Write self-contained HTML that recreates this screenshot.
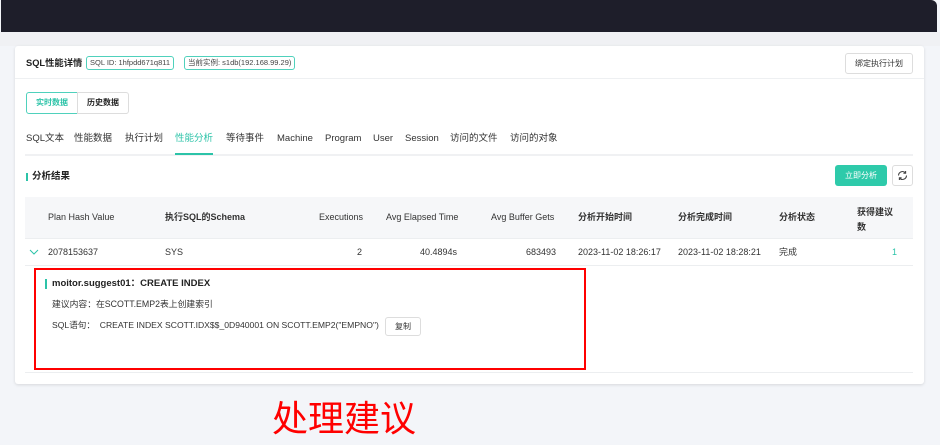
<!DOCTYPE html>
<html><head><meta charset="utf-8"><style>
*{box-sizing:border-box;margin:0;padding:0}
body{width:940px;height:445px;background:#f3f5f9;font-family:"Liberation Sans","Noto Sans CJK SC",sans-serif;color:#333;position:relative;overflow:hidden;font-size:9px;line-height:12px}
.top{position:absolute;left:1px;top:0;width:936px;height:32px;background:#1e1e2a;border-top-right-radius:6px}
.gap{position:absolute;left:0;top:32px;width:940px;height:14px;background:#f0f1f4}
.card{position:absolute;left:15px;top:46px;width:909px;height:338px;background:#fff;border-radius:3px;box-shadow:0 1px 3px rgba(0,0,0,.12)}
.a{position:absolute;white-space:nowrap;line-height:12px}
.t{position:absolute;top:87px;white-space:nowrap;line-height:12px;font-size:9.5px}
.tag{position:absolute;border:1px solid #4fd1bc;border-radius:3px;height:14px;line-height:12px;padding:0 3px;font-size:7.5px;color:#444;white-space:nowrap}
.btn{position:absolute;border:1px solid #ddd;border-radius:3px;background:#fff;text-align:center;font-size:8px;white-space:nowrap}
.th{position:absolute;font-weight:bold;font-size:9px;color:#333;line-height:12px;white-space:nowrap}
</style></head><body>
<div class="top"></div><div class="gap"></div>
<div class="card">
<div class="a" style="left:11px;top:11px;font-size:9.3px;font-weight:bold;color:#222">SQL性能详情</div>
<div class="tag" style="left:71px;top:10px">SQL ID: 1hfpdd671q811</div>
<div class="tag" style="left:169px;top:10px">当前实例: s1db(192.168.99.29)</div>
<div class="btn" style="left:830px;top:7px;width:68px;height:21px;line-height:19px;color:#333">绑定执行计划</div>
<div style="position:absolute;left:0;top:32px;width:909px;height:1px;background:#eef0f2"></div>
<div class="btn" style="left:11px;top:46px;width:52px;height:22px;line-height:20px;border-color:#4fd1bc;color:#2cc3a8;font-weight:bold;border-radius:3px 0 0 3px">实时数据</div>
<div class="btn" style="left:62px;top:46px;width:52px;height:22px;line-height:20px;font-weight:bold;color:#222;border-radius:0 3px 3px 0">历史数据</div>
<div class="t" style="left:11px">SQL文本</div>
<div class="t" style="left:59px">性能数据</div>
<div class="t" style="left:110px">执行计划</div>
<div class="t" style="left:160px;color:#2cc3a8">性能分析</div>
<div class="t" style="left:211px">等待事件</div>
<div class="t" style="left:262px">Machine</div>
<div class="t" style="left:310px">Program</div>
<div class="t" style="left:358px">User</div>
<div class="t" style="left:390px">Session</div>
<div class="t" style="left:435px">访问的文件</div>
<div class="t" style="left:495px">访问的对象</div>
<div style="position:absolute;left:10px;top:108px;width:888px;height:2px;background:#f0f1f3"></div>
<div style="position:absolute;left:160px;top:107px;width:38px;height:2px;background:#2cc3a8"></div>
<div style="position:absolute;left:11px;top:127px;width:2px;height:8px;background:#2cc3a8"></div>
<div class="a" style="left:17px;top:125px;font-size:9.5px;font-weight:bold;color:#222">分析结果</div>
<div class="btn" style="left:820px;top:119px;width:52px;height:21px;line-height:21px;background:#2ecaaa;border:none;color:#fff">立即分析</div>
<div class="btn" style="left:877px;top:119px;width:21px;height:21px">
<svg width="19" height="19" viewBox="0 0 19 19"><path d="M5.5 9.5a4 4 0 0 1 6.8-2.8M13.5 9.5a4 4 0 0 1-6.8 2.8" fill="none" stroke="#444" stroke-width="1.1"/><path d="M12.6 5v2.2h-2.2M6.4 14v-2.2h2.2" fill="none" stroke="#444" stroke-width="1.1"/></svg></div>
<div style="position:absolute;left:10px;top:151px;width:888px;height:42px;background:#f6f7f9;border-bottom:1px solid #eceef0"></div>
<div class="th" style="left:33px;top:165px;font-weight:normal">Plan Hash Value</div>
<div class="th" style="left:150px;top:165px">执行SQL的Schema</div>
<div class="th" style="left:304px;top:165px;font-weight:normal">Executions</div>
<div class="th" style="left:371px;top:165px;font-weight:normal">Avg Elapsed Time</div>
<div class="th" style="left:476px;top:165px;font-weight:normal">Avg Buffer Gets</div>
<div class="th" style="left:563px;top:165px">分析开始时间</div>
<div class="th" style="left:663px;top:165px">分析完成时间</div>
<div class="th" style="left:764px;top:165px">分析状态</div>
<div class="th" style="left:842px;top:159px;line-height:15px">获得建议<br>数</div>
<svg style="position:absolute;left:14px;top:203px" width="10" height="7"><path d="M1 1l4 4 4-4" fill="none" stroke="#2cc3a8" stroke-width="1"/></svg>
<div class="a" style="left:33px;top:200px">2078153637</div>
<div class="a" style="left:150px;top:200px">SYS</div>
<div class="a" style="left:342px;top:200px">2</div>
<div class="a" style="left:405px;top:200px">40.4894s</div>
<div class="a" style="left:511px;top:200px">683493</div>
<div class="a" style="left:563px;top:200px">2023-11-02 18:26:17</div>
<div class="a" style="left:663px;top:200px">2023-11-02 18:28:21</div>
<div class="a" style="left:764px;top:200px">完成</div>
<div class="a" style="left:877px;top:200px;color:#2cc3a8">1</div>
<div style="position:absolute;left:10px;top:219px;width:888px;height:1px;background:#eceef0"></div>
<div style="position:absolute;left:10px;top:326px;width:888px;height:1px;background:#eceef0"></div>
<div style="position:absolute;left:19px;top:222px;width:552px;height:102px;border:2px solid #f00"></div>
<div style="position:absolute;left:30px;top:233px;width:2px;height:10px;background:#2cc3a8"></div>
<div class="a" style="left:37px;top:232px;font-size:9.5px;font-weight:bold;color:#222">moitor.suggest01：CREATE INDEX</div>
<div class="a" style="left:37px;top:252px;font-size:8.8px">建议内容：在SCOTT.EMP2表上创建索引</div>
<div class="a" style="left:37px;top:273px;font-size:8.6px">SQL语句：&nbsp; CREATE INDEX SCOTT.IDX$$_0D940001 ON SCOTT.EMP2("EMPNO")</div>
<div class="btn" style="left:370px;top:271px;width:36px;height:19px;line-height:18px">复制</div>
</div>
<div class="a" style="left:272px;top:397px;font-size:36px;line-height:38px;color:#f00;font-family:'Noto Sans CJK SC',sans-serif">处理建议</div>
</body></html>
